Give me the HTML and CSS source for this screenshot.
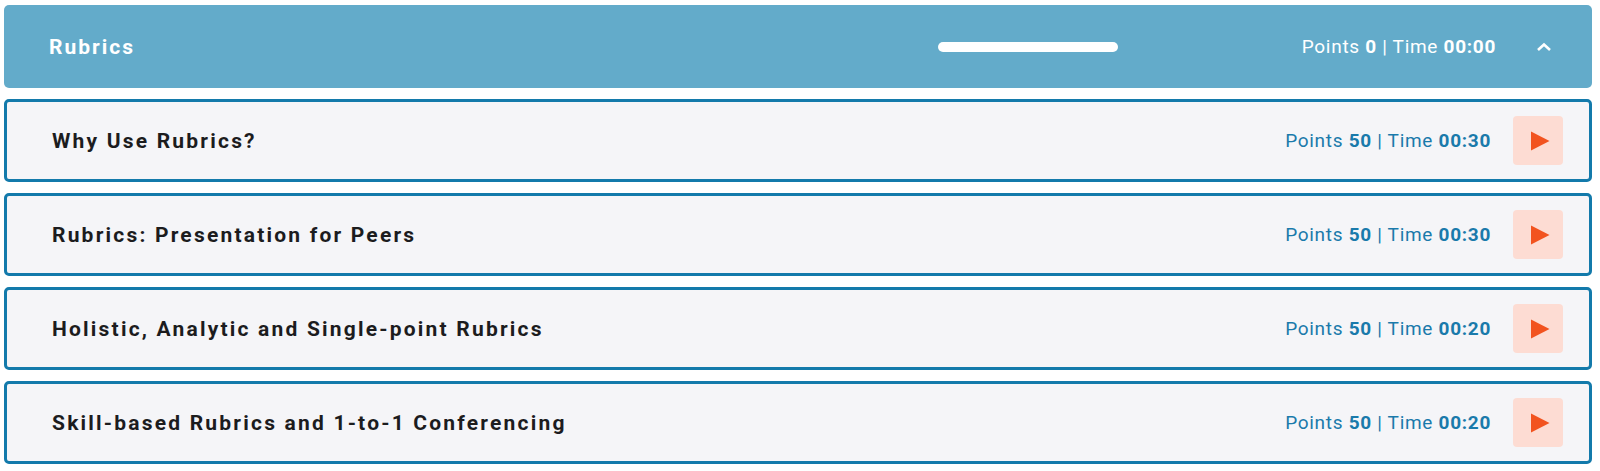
FILE: index.html
```html
<!DOCTYPE html>
<html lang="en">
<head>
  <meta charset="UTF-8">
  <title>Rubrics</title>
  <link rel="stylesheet" href="styles.css">
</head>
<body>

<div class="module">
  <div class="module-head">
    <h2 class="module-title">Rubrics</h2>
    <div class="progress"><div class="progress-fill"></div></div>
    <div class="stats">Points <b>0</b> | Time <b>00:00</b></div>
    <button class="toggle" aria-label="Collapse">
      <svg width="16" height="10" viewBox="0 0 16 10">
        <path d="M2 8 L8 2.5 L14 8" fill="none" stroke="#fff" stroke-width="2.6"/>
      </svg>
    </button>
  </div>

  <div class="lesson">
    <span class="lesson-title">Why Use Rubrics?</span>
    <span class="stats">Points <b>50</b> | Time <b>00:30</b></span>
    <button class="play" aria-label="Play">
      <svg width="20" height="20" viewBox="0 0 20 20"><path d="M1 0.5 L19.5 10 L1 19.5 Z" fill="#f2531f"/></svg>
    </button>
  </div>

  <div class="lesson">
    <span class="lesson-title">Rubrics: Presentation for Peers</span>
    <span class="stats">Points <b>50</b> | Time <b>00:30</b></span>
    <button class="play" aria-label="Play">
      <svg width="20" height="20" viewBox="0 0 20 20"><path d="M1 0.5 L19.5 10 L1 19.5 Z" fill="#f2531f"/></svg>
    </button>
  </div>

  <div class="lesson">
    <span class="lesson-title">Holistic, Analytic and Single-point Rubrics</span>
    <span class="stats">Points <b>50</b> | Time <b>00:20</b></span>
    <button class="play" aria-label="Play">
      <svg width="20" height="20" viewBox="0 0 20 20"><path d="M1 0.5 L19.5 10 L1 19.5 Z" fill="#f2531f"/></svg>
    </button>
  </div>

  <div class="lesson">
    <span class="lesson-title">Skill-based Rubrics and 1-to-1 Conferencing</span>
    <span class="stats">Points <b>50</b> | Time <b>00:20</b></span>
    <button class="play" aria-label="Play">
      <svg width="20" height="20" viewBox="0 0 20 20"><path d="M1 0.5 L19.5 10 L1 19.5 Z" fill="#f2531f"/></svg>
    </button>
  </div>
</div>

</body>
</html>
```

FILE: styles.css
```css
body {
  margin: 0;
  font-family: Roboto, "Liberation Sans", sans-serif;
  background: #fff;
}

.module {
  padding: 5px 8px 0 4px;
  display: flex;
  flex-direction: column;
  gap: 11px;
}

.module-head {
  height: 83px;
  display: flex;
  align-items: center;
  padding: 0 40px 0 45px;
  background: #63abca;
  border-radius: 5px;
  color: #fff;
}

.module-title {
  flex: 1;
  margin: 0;
  font-size: 21px;
  font-weight: 700;
  letter-spacing: 2px;
}

.progress {
  width: 180px;
  height: 10px;
  border-radius: 5px;
  background: #fff;
}

.module-head .stats {
  margin-left: 184px;
  color: #fff;
}

.stats {
  font-size: 19px;
  letter-spacing: 0.7px;
}

.stats b {
  font-weight: 700;
}

.toggle {
  margin-left: 40px;
  padding: 0;
  border: none;
  background: none;
  display: flex;
  cursor: pointer;
}

.lesson {
  height: 83px;
  box-sizing: border-box;
  display: flex;
  align-items: center;
  padding: 0 26px 0 45px;
  border: 3px solid #137aab;
  border-radius: 5px;
  background: #f5f5f8;
}

.lesson-title {
  flex: 1;
  font-size: 21px;
  font-weight: 700;
  letter-spacing: 2.2px;
  color: #1c1c1e;
}

.lesson .stats {
  color: #1a7aab;
}

.play {
  width: 50px;
  height: 49px;
  margin-left: 22px;
  border: none;
  border-radius: 4px;
  background: #fddcd3;
  display: flex;
  align-items: center;
  justify-content: center;
  padding: 0 0 0 4px;
  cursor: pointer;
}
```
